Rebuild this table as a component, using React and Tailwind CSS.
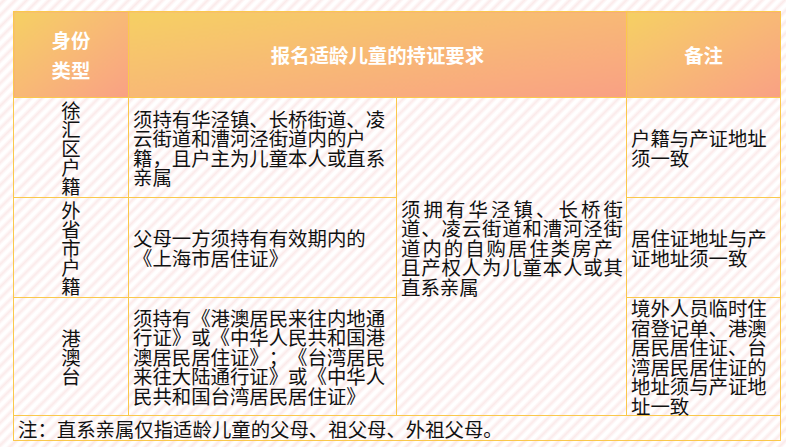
import React from "react";

const font = { fontFamily: '"Noto Sans CJK SC", "Noto Sans", sans-serif' };

export default function App() {
  const bd = "border border-[#fac84c]";
  const cell = `${bd} px-[4px] py-0 align-middle text-[19.4px] leading-[19.5px] text-[#111]`;
  const hd = `${bd} bg-linear-to-br from-[#f5d062] to-[#f9a084] text-white font-bold text-[19.4px] text-center align-middle`;
  const jl = "[text-align-last:justify] text-justify";
  return (
    <div
      className="w-[786px] h-[447px] overflow-hidden bg-[repeating-linear-gradient(135deg,#ffffff_0px,#fbeaea_3px,#ffffff_6px,#ffffff_8px)] pt-[11px] pl-[13px] [text-spacing-trim:space-all]"
      style={font}
    >
      <table className="w-[767px] table-fixed border-collapse">
        <colgroup>
          <col className="w-[115px]" />
          <col className="w-[268px]" />
          <col className="w-[230px]" />
          <col className="w-[154px]" />
        </colgroup>
        <thead>
          <tr className="h-[86px]">
            <th className={`${hd} leading-[30px]`}>
              身份
              <br />
              类型
            </th>
            <th colSpan={2} className={hd}>
              报名适龄儿童的持证要求
            </th>
            <th className={hd}>备注</th>
          </tr>
        </thead>
        <tbody>
          <tr className="h-[100px]">
            <td className={`${cell} text-center`}>
              <div className="mx-auto w-[1em] leading-[19px]">徐汇区户籍</div>
            </td>
            <td className={cell}>
              须持有华泾镇、长桥街道、凌云街道和漕河泾街道内的户籍，且户主为儿童本人或直系亲属
            </td>
            <td rowSpan={3} className={`${cell} pb-[18px] leading-[18px]`}>
              <div className="w-[222px]">
                <div className={jl}>须拥有华泾镇、长桥街</div>
                <div className={jl}>道、凌云街道和漕河泾街</div>
                <div className={`${jl} w-[212px]`}>道内的自购居住类房产</div>
                <div className={jl}>且产权人为儿童本人或其</div>
                <div>直系亲属</div>
              </div>
            </td>
            <td className={cell}>户籍与产证地址须一致</td>
          </tr>
          <tr className="h-[100px]">
            <td className={`${cell} text-center`}>
              <div className="mx-auto w-[1em] leading-[19px]">外省市户籍</div>
            </td>
            <td className={cell}>父母一方须持有有效期内的《上海市居住证》</td>
            <td className={cell}>居住证地址与产证地址须一致</td>
          </tr>
          <tr className="h-[118px]">
            <td className={`${cell} text-center`}>
              <div className="mx-auto w-[1em] leading-[19px]">港澳台</div>
            </td>
            <td className={cell}>
              须持有《港澳居民来往内地通行证》或《中华人民共和国港澳居民居住证》；《台湾居民来往大陆通行证》或《中华人民共和国台湾居民居住证》
            </td>
            <td className={`${cell} leading-[19.4px]`}>
              境外人员临时住宿登记单、港澳居民居住证、台湾居民居住证的地址须与产证地址一致
            </td>
          </tr>
          <tr className="h-[25px]">
            <td colSpan={4} className={`${cell} leading-[23px]`}>
              注：直系亲属仅指适龄儿童的父母、祖父母、外祖父母。
            </td>
          </tr>
        </tbody>
      </table>
    </div>
  );
}
